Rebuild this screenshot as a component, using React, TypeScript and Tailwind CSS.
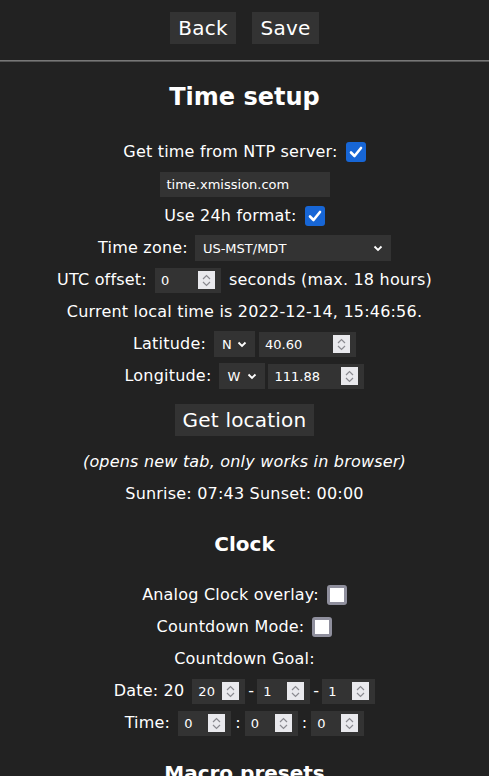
import React from "react";

const Spin = () => (
  <span className="ml-auto mr-[6px] flex h-[18px] w-[17px] shrink-0 items-center justify-center bg-[#e9e9ed]">
    <svg width="9" height="13" viewBox="0 0 9 13" fill="none" stroke="#8a8a90" strokeWidth="1.2">
      <path d="M1 5 L4.5 1.5 L8 5" />
      <path d="M1 8 L4.5 11.5 L8 8" />
    </svg>
  </span>
);

const Num = ({ v, w }: { v: string; w: string }) => (
  <span className={`inline-flex h-[25px] items-center bg-[#333] pl-[6px] text-[13px] leading-none tracking-normal ${w}`}>
    <span>{v}</span>
    <Spin />
  </span>
);

const Chev = () => (
  <svg width="10" height="7" viewBox="0 0 10 7" fill="none" stroke="#fff" strokeWidth="1.8">
    <path d="M1.5 1.5 L5 5 L8.5 1.5" />
  </svg>
);

const Sel = ({ v, w }: { v: string; w: string }) => (
  <span className={`inline-flex h-[26px] items-center justify-between bg-[#333] px-[8px] text-[13px] leading-none tracking-normal ${w}`}>
    <span>{v}</span>
    <Chev />
  </span>
);

const Checked = () => (
  <span className="ml-[8px] inline-flex h-[20px] w-[20px] items-center justify-center rounded-[3px] bg-[#1766d6]">
    <svg width="14" height="12" viewBox="0 0 14 12" fill="none" stroke="#fff" strokeWidth="2.6" strokeLinecap="round" strokeLinejoin="round">
      <path d="M2 6.5 L5.5 10 L12 2" />
    </svg>
  </span>
);

const Unchecked = () => (
  <span className="ml-[8px] inline-block h-[20px] w-[20px] rounded-[3px] border-[3px] border-[#8f8f9d] bg-white" />
);

const Row = ({ children, cls = "" }: { children: React.ReactNode; cls?: string }) => (
  <div className={`flex h-8 items-center justify-center ${cls}`}>{children}</div>
);

export default function App() {
  return (
    <div
      className="min-h-[776px] bg-[#222] text-center text-[16px] tracking-[0.2px] text-white"
      style={{ fontFamily: '"DejaVu Sans", Verdana, sans-serif' }}
    >
      <div className="flex justify-center gap-4 pt-3">
        <span className="flex h-8 w-[66px] items-center justify-center bg-[#333] text-[20px]">Back</span>
        <span className="flex h-8 w-[67px] items-center justify-center bg-[#333] text-[20px]">Save</span>
      </div>
      <div className="mt-[16px] h-[2px] border-t border-b border-t-[#777] border-b-[#555]" />
      <div className="mt-[20px] flex h-[30px] items-center justify-center text-[24px] font-bold tracking-normal">Time setup</div>
      <div className="mt-[24px]">
        <Row>
          Get time from NTP server:
          <Checked />
        </Row>
        <Row>
          <span className="inline-flex h-[25px] w-[170px] items-center bg-[#333] pl-[7px] text-[13px] leading-none tracking-normal">
            time.xmission.com
          </span>
        </Row>
        <Row>
          Use 24h format:
          <Checked />
        </Row>
        <Row>
          <span className="mr-[7px]">Time zone:</span>
          <Sel v="US-MST/MDT" w="w-[196px]" />
        </Row>
        <Row>
          <span className="mr-[8px]">UTC offset:</span>
          <Num v="0" w="w-[66px]" />
          <span className="ml-[8px]">seconds (max. 18 hours)</span>
        </Row>
        <Row>Current local time is 2022-12-14, 15:46:56.</Row>
        <Row>
          <span className="mr-[8px]">Latitude:</span>
          <Sel v="N" w="w-[41px]" />
          <span className="ml-[4px]">
            <Num v="40.60" w="w-[97px]" />
          </span>
        </Row>
        <Row>
          <span className="mr-[8px]">Longitude:</span>
          <Sel v="W" w="w-[46px]" />
          <span className="ml-[3px]">
            <Num v="111.88" w="w-[96px]" />
          </span>
        </Row>
        <div className="mt-[12px] mb-[10px] flex justify-center">
          <span className="flex h-8 w-[139px] items-center justify-center bg-[#333] text-[20px]">Get location</span>
        </div>
        <Row>
          <i>(opens new tab, only works in browser)</i>
        </Row>
        <Row>Sunrise: 07:43 Sunset: 00:00</Row>
      </div>
      <div className="mt-[18px] flex h-8 items-center justify-center text-[20px] font-bold tracking-normal">Clock</div>
      <div className="mt-[19px]">
        <Row>
          Analog Clock overlay:
          <Unchecked />
        </Row>
        <Row>
          Countdown Mode:
          <Unchecked />
        </Row>
        <Row>Countdown Goal:</Row>
        <Row>
          <span className="mr-[8px]">Date: 20</span>
          <Num v="20" w="w-[53px]" />
          <span className="mx-[3px]">-</span>
          <Num v="1" w="w-[53px]" />
          <span className="mx-[3px]">-</span>
          <Num v="1" w="w-[53px]" />
        </Row>
        <Row>
          <span className="mr-[8px]">Time:</span>
          <Num v="0" w="w-[53px]" />
          <span className="mx-[4px]">:</span>
          <Num v="0" w="w-[53px]" />
          <span className="mx-[4px]">:</span>
          <Num v="0" w="w-[53px]" />
        </Row>
      </div>
      <div className="mt-[18px] flex h-8 items-center justify-center text-[20px] font-bold tracking-normal">Macro presets</div>
      <div className="h-40" />
    </div>
  );
}
